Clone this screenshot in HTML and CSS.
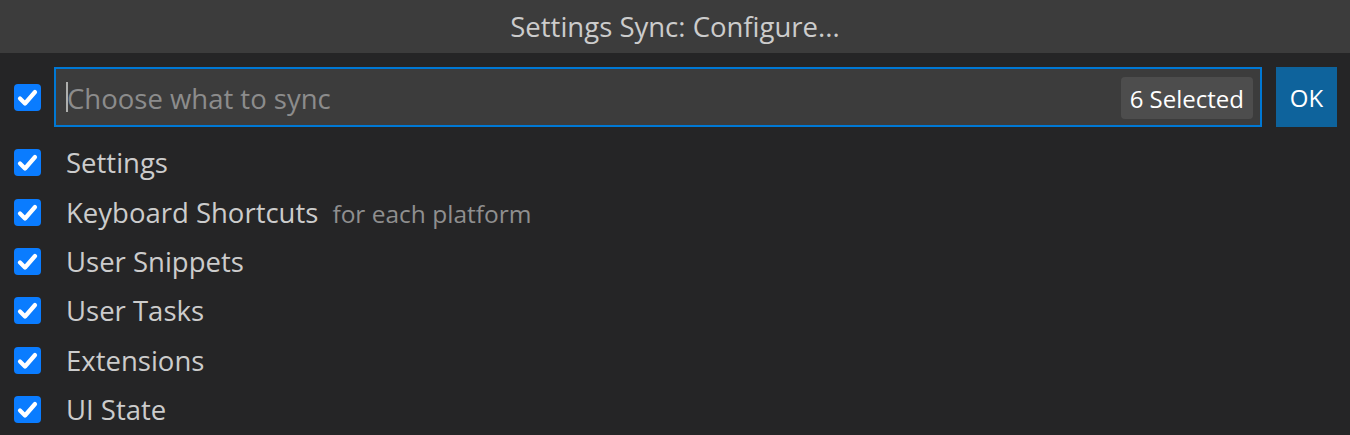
FILE: index.html
```html
<!DOCTYPE html>
<html>
<head>
<meta charset="utf-8">
<link rel="stylesheet" href="styles.css">
</head>
<body>
<div class="quick-input">
  <div class="title">Settings Sync: Configure...</div>
  <div class="header">
    <span class="cb"><svg viewBox="0 0 27 27"><path d="M6 14.5 L11 19.5 L21 8" /></svg></span>
    <div class="input">
      <span class="caret"></span>
      <span class="placeholder">Choose what to sync</span>
      <span class="count">6 Selected</span>
    </div>
    <button class="ok">OK</button>
  </div>
  <div class="list">
    <div class="row"><span class="cb"><svg viewBox="0 0 27 27"><path d="M6 14.5 L11 19.5 L21 8" /></svg></span><span class="label">Settings</span></div>
    <div class="row"><span class="cb"><svg viewBox="0 0 27 27"><path d="M6 14.5 L11 19.5 L21 8" /></svg></span><span class="label">Keyboard Shortcuts</span><span class="desc">for each platform</span></div>
    <div class="row"><span class="cb"><svg viewBox="0 0 27 27"><path d="M6 14.5 L11 19.5 L21 8" /></svg></span><span class="label">User Snippets</span></div>
    <div class="row"><span class="cb"><svg viewBox="0 0 27 27"><path d="M6 14.5 L11 19.5 L21 8" /></svg></span><span class="label">User Tasks</span></div>
    <div class="row"><span class="cb"><svg viewBox="0 0 27 27"><path d="M6 14.5 L11 19.5 L21 8" /></svg></span><span class="label">Extensions</span></div>
    <div class="row"><span class="cb"><svg viewBox="0 0 27 27"><path d="M6 14.5 L11 19.5 L21 8" /></svg></span><span class="label">UI State</span></div>
  </div>
</div>
</body>
</html>
```

FILE: styles.css
```css
html, body {
  margin: 0;
  padding: 0;
  background: #252526;
  width: 1350px;
  height: 435px;
  overflow: hidden;
}
.quick-input {
  font-family: "Open Sans", "Noto Sans", sans-serif;
  color: #cccccc;
}
.title {
  height: 53px;
  background: #3c3c3c;
  display: flex;
  align-items: center;
  justify-content: center;
  font-size: 27.5px;
  color: #cccccc;
}
.header {
  display: flex;
  align-items: center;
  padding: 14px 13px 0 14px;
  height: 60px;
}
.cb {
  width: 27px;
  height: 27px;
  border-radius: 4px;
  background: #0a7cff;
  flex: none;
  display: block;
}
.cb svg {
  width: 27px;
  height: 27px;
  display: block;
}
.cb path {
  fill: none;
  stroke: #ffffff;
  stroke-width: 4.2;
  stroke-linecap: round;
  stroke-linejoin: round;
}
.input {
  flex: 1;
  margin-left: 13px;
  height: 60px;
  box-sizing: border-box;
  border: 2px solid #0078d4;
  background: #3c3c3c;
  display: flex;
  align-items: center;
  padding: 0 7px 0 10px;
}
.caret {
  width: 2px;
  height: 30px;
  background: #aeafad;
  flex: none;
}
.placeholder {
  flex: 1;
  font-size: 27.5px;
  color: #8c8c8c;
  margin-left: -1px;
  padding-top: 3px;
}
.count {
  background: #4d4d4d;
  color: #ffffff;
  font-size: 24px;
  border-radius: 4px;
  height: 42px;
  display: flex;
  align-items: center;
  padding: 0 9px;
  margin-top: 2px;
}
.ok {
  margin-left: 14px;
  width: 61px;
  height: 60px;
  border: none;
  background: #0e639c;
  color: #ffffff;
  font-family: inherit;
  font-size: 24px;
  padding: 0;
}
.list {
  padding-top: 11px;
}
.row {
  height: 49.4px;
  display: flex;
  align-items: center;
  padding-left: 14px;
}
.label {
  margin-left: 25px;
  font-size: 27.5px;
  color: #cccccc;
}
.desc {
  margin-left: 14px;
  font-size: 24.5px;
  color: #8f8f8f;
  padding-top: 2px;
}
```
